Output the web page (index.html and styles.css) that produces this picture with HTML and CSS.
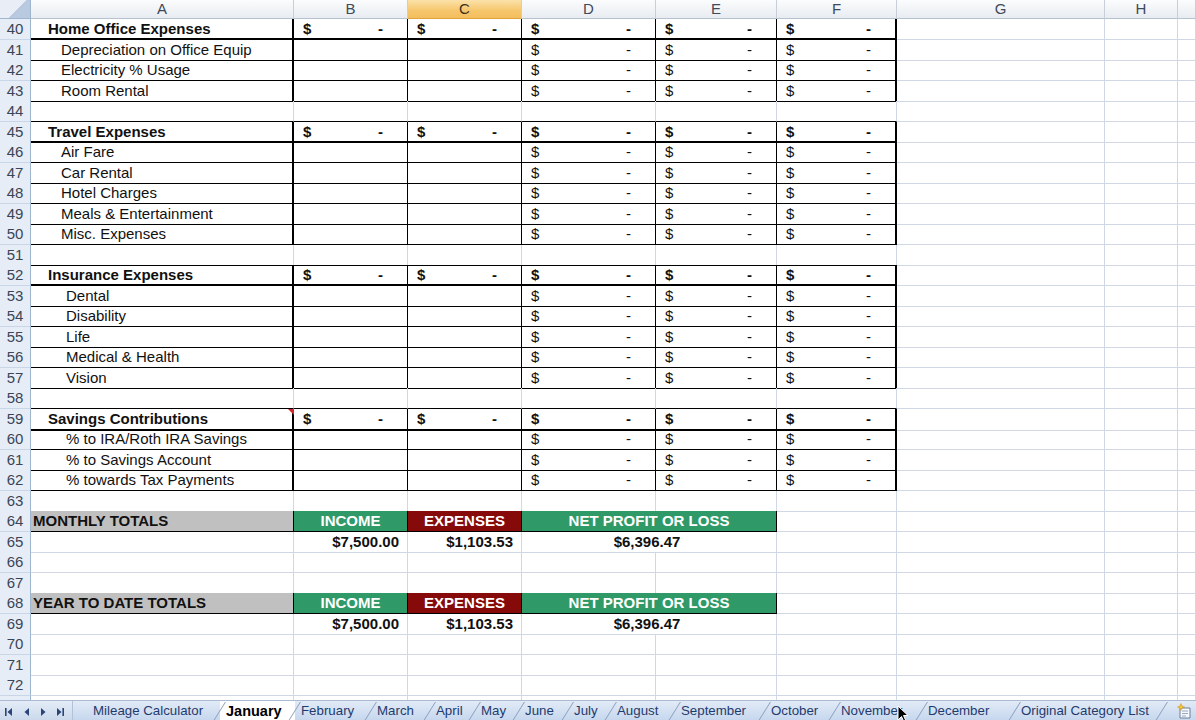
FILE: index.html
```html
<!DOCTYPE html>
<html>
<head>
<meta charset="utf-8">
<title>Budget - January</title>
<link rel="stylesheet" href="styles.css">
</head>
<body>
<div class="sheet">
  <div class="row hdrrow">
    <div class="corner"></div>
    <div class="ch">A</div><div class="ch">B</div><div class="ch sel">C</div><div class="ch">D</div><div class="ch">E</div><div class="ch">F</div><div class="ch">G</div><div class="ch">H</div><div class="ch"></div>
  </div>

  <div class="row hd">
    <div class="rh">40</div>
    <div class="c bb2 br2 h1">Home Office Expenses</div>
    <div class="c m bb2 br"><span>$</span><span>-</span></div>
    <div class="c m bb2 br"><span>$</span><span>-</span></div>
    <div class="c m bb2 br"><span>$</span><span>-</span></div>
    <div class="c m bb2 br"><span>$</span><span>-</span></div>
    <div class="c m bb2 br2"><span>$</span><span>-</span></div>
    <div class="c"></div><div class="c"></div><div class="c"></div>
  </div>
  <div class="row">
    <div class="rh">41</div>
    <div class="c bb br2 s1">Depreciation on Office Equip</div>
    <div class="c bb br"></div><div class="c bb br"></div>
    <div class="c m bb br"><span>$</span><span>-</span></div>
    <div class="c m bb br"><span>$</span><span>-</span></div>
    <div class="c m bb br2"><span>$</span><span>-</span></div>
    <div class="c"></div><div class="c"></div><div class="c"></div>
  </div>
  <div class="row">
    <div class="rh">42</div>
    <div class="c bb br2 s1">Electricity % Usage</div>
    <div class="c bb br"></div><div class="c bb br"></div>
    <div class="c m bb br"><span>$</span><span>-</span></div>
    <div class="c m bb br"><span>$</span><span>-</span></div>
    <div class="c m bb br2"><span>$</span><span>-</span></div>
    <div class="c"></div><div class="c"></div><div class="c"></div>
  </div>
  <div class="row">
    <div class="rh">43</div>
    <div class="c bb br2 s1">Room Rental</div>
    <div class="c bb br"></div><div class="c bb br"></div>
    <div class="c m bb br"><span>$</span><span>-</span></div>
    <div class="c m bb br"><span>$</span><span>-</span></div>
    <div class="c m bb br2"><span>$</span><span>-</span></div>
    <div class="c"></div><div class="c"></div><div class="c"></div>
  </div>
  <div class="row">
    <div class="rh">44</div>
    <div class="c bb"></div><div class="c bb"></div><div class="c bb"></div><div class="c bb"></div><div class="c bb"></div><div class="c bb"></div>
    <div class="c"></div><div class="c"></div><div class="c"></div>
  </div>

  <div class="row hd">
    <div class="rh">45</div>
    <div class="c bb2 br2 h1">Travel Expenses</div>
    <div class="c m bb2 br"><span>$</span><span>-</span></div>
    <div class="c m bb2 br"><span>$</span><span>-</span></div>
    <div class="c m bb2 br"><span>$</span><span>-</span></div>
    <div class="c m bb2 br"><span>$</span><span>-</span></div>
    <div class="c m bb2 br2"><span>$</span><span>-</span></div>
    <div class="c"></div><div class="c"></div><div class="c"></div>
  </div>
  <div class="row">
    <div class="rh">46</div>
    <div class="c bb br2 s1">Air Fare</div>
    <div class="c bb br"></div><div class="c bb br"></div>
    <div class="c m bb br"><span>$</span><span>-</span></div>
    <div class="c m bb br"><span>$</span><span>-</span></div>
    <div class="c m bb br2"><span>$</span><span>-</span></div>
    <div class="c"></div><div class="c"></div><div class="c"></div>
  </div>
  <div class="row">
    <div class="rh">47</div>
    <div class="c bb br2 s1">Car Rental</div>
    <div class="c bb br"></div><div class="c bb br"></div>
    <div class="c m bb br"><span>$</span><span>-</span></div>
    <div class="c m bb br"><span>$</span><span>-</span></div>
    <div class="c m bb br2"><span>$</span><span>-</span></div>
    <div class="c"></div><div class="c"></div><div class="c"></div>
  </div>
  <div class="row">
    <div class="rh">48</div>
    <div class="c bb br2 s1">Hotel Charges</div>
    <div class="c bb br"></div><div class="c bb br"></div>
    <div class="c m bb br"><span>$</span><span>-</span></div>
    <div class="c m bb br"><span>$</span><span>-</span></div>
    <div class="c m bb br2"><span>$</span><span>-</span></div>
    <div class="c"></div><div class="c"></div><div class="c"></div>
  </div>
  <div class="row">
    <div class="rh">49</div>
    <div class="c bb br2 s1">Meals &amp; Entertainment</div>
    <div class="c bb br"></div><div class="c bb br"></div>
    <div class="c m bb br"><span>$</span><span>-</span></div>
    <div class="c m bb br"><span>$</span><span>-</span></div>
    <div class="c m bb br2"><span>$</span><span>-</span></div>
    <div class="c"></div><div class="c"></div><div class="c"></div>
  </div>
  <div class="row">
    <div class="rh">50</div>
    <div class="c bb br2 s1">Misc. Expenses</div>
    <div class="c bb br"></div><div class="c bb br"></div>
    <div class="c m bb br"><span>$</span><span>-</span></div>
    <div class="c m bb br"><span>$</span><span>-</span></div>
    <div class="c m bb br2"><span>$</span><span>-</span></div>
    <div class="c"></div><div class="c"></div><div class="c"></div>
  </div>
  <div class="row">
    <div class="rh">51</div>
    <div class="c bb"></div><div class="c bb"></div><div class="c bb"></div><div class="c bb"></div><div class="c bb"></div><div class="c bb"></div>
    <div class="c"></div><div class="c"></div><div class="c"></div>
  </div>

  <div class="row hd">
    <div class="rh">52</div>
    <div class="c bb2 br2 h1">Insurance Expenses</div>
    <div class="c m bb2 br"><span>$</span><span>-</span></div>
    <div class="c m bb2 br"><span>$</span><span>-</span></div>
    <div class="c m bb2 br"><span>$</span><span>-</span></div>
    <div class="c m bb2 br"><span>$</span><span>-</span></div>
    <div class="c m bb2 br2"><span>$</span><span>-</span></div>
    <div class="c"></div><div class="c"></div><div class="c"></div>
  </div>
  <div class="row">
    <div class="rh">53</div>
    <div class="c bb br2 s2">Dental</div>
    <div class="c bb br"></div><div class="c bb br"></div>
    <div class="c m bb br"><span>$</span><span>-</span></div>
    <div class="c m bb br"><span>$</span><span>-</span></div>
    <div class="c m bb br2"><span>$</span><span>-</span></div>
    <div class="c"></div><div class="c"></div><div class="c"></div>
  </div>
  <div class="row">
    <div class="rh">54</div>
    <div class="c bb br2 s2">Disability</div>
    <div class="c bb br"></div><div class="c bb br"></div>
    <div class="c m bb br"><span>$</span><span>-</span></div>
    <div class="c m bb br"><span>$</span><span>-</span></div>
    <div class="c m bb br2"><span>$</span><span>-</span></div>
    <div class="c"></div><div class="c"></div><div class="c"></div>
  </div>
  <div class="row">
    <div class="rh">55</div>
    <div class="c bb br2 s2">Life</div>
    <div class="c bb br"></div><div class="c bb br"></div>
    <div class="c m bb br"><span>$</span><span>-</span></div>
    <div class="c m bb br"><span>$</span><span>-</span></div>
    <div class="c m bb br2"><span>$</span><span>-</span></div>
    <div class="c"></div><div class="c"></div><div class="c"></div>
  </div>
  <div class="row">
    <div class="rh">56</div>
    <div class="c bb br2 s2">Medical &amp; Health</div>
    <div class="c bb br"></div><div class="c bb br"></div>
    <div class="c m bb br"><span>$</span><span>-</span></div>
    <div class="c m bb br"><span>$</span><span>-</span></div>
    <div class="c m bb br2"><span>$</span><span>-</span></div>
    <div class="c"></div><div class="c"></div><div class="c"></div>
  </div>
  <div class="row">
    <div class="rh">57</div>
    <div class="c bb br2 s2">Vision</div>
    <div class="c bb br"></div><div class="c bb br"></div>
    <div class="c m bb br"><span>$</span><span>-</span></div>
    <div class="c m bb br"><span>$</span><span>-</span></div>
    <div class="c m bb br2"><span>$</span><span>-</span></div>
    <div class="c"></div><div class="c"></div><div class="c"></div>
  </div>
  <div class="row">
    <div class="rh">58</div>
    <div class="c bb"></div><div class="c bb"></div><div class="c bb"></div><div class="c bb"></div><div class="c bb"></div><div class="c bb"></div>
    <div class="c"></div><div class="c"></div><div class="c"></div>
  </div>

  <div class="row hd">
    <div class="rh">59</div>
    <div class="c bb2 br2 h1 note">Savings Contributions</div>
    <div class="c m bb2 br"><span>$</span><span>-</span></div>
    <div class="c m bb2 br"><span>$</span><span>-</span></div>
    <div class="c m bb2 br"><span>$</span><span>-</span></div>
    <div class="c m bb2 br"><span>$</span><span>-</span></div>
    <div class="c m bb2 br2"><span>$</span><span>-</span></div>
    <div class="c"></div><div class="c"></div><div class="c"></div>
  </div>
  <div class="row">
    <div class="rh">60</div>
    <div class="c bb br2 s2">% to IRA/Roth IRA Savings</div>
    <div class="c bb br"></div><div class="c bb br"></div>
    <div class="c m bb br"><span>$</span><span>-</span></div>
    <div class="c m bb br"><span>$</span><span>-</span></div>
    <div class="c m bb br2"><span>$</span><span>-</span></div>
    <div class="c"></div><div class="c"></div><div class="c"></div>
  </div>
  <div class="row">
    <div class="rh">61</div>
    <div class="c bb br2 s2">% to Savings Account</div>
    <div class="c bb br"></div><div class="c bb br"></div>
    <div class="c m bb br"><span>$</span><span>-</span></div>
    <div class="c m bb br"><span>$</span><span>-</span></div>
    <div class="c m bb br2"><span>$</span><span>-</span></div>
    <div class="c"></div><div class="c"></div><div class="c"></div>
  </div>
  <div class="row">
    <div class="rh">62</div>
    <div class="c bb br2 s2">% towards Tax Payments</div>
    <div class="c bb br"></div><div class="c bb br"></div>
    <div class="c m bb br"><span>$</span><span>-</span></div>
    <div class="c m bb br"><span>$</span><span>-</span></div>
    <div class="c m bb br2"><span>$</span><span>-</span></div>
    <div class="c"></div><div class="c"></div><div class="c"></div>
  </div>
  <div class="row">
    <div class="rh">63</div>
    <div class="c bb"></div><div class="c bb"></div><div class="c bb"></div><div class="c bb"></div><div class="c bb"></div>
    <div class="c"></div><div class="c"></div><div class="c"></div><div class="c"></div>
  </div>

  <div class="row">
    <div class="rh">64</div>
    <div class="c bb br tl">MONTHLY TOTALS</div>
    <div class="c bb br lab green">INCOME</div>
    <div class="c bb br lab red">EXPENSES</div>
    <div class="c bb br lab green span2">NET PROFIT OR LOSS</div>
    <div class="c"></div><div class="c"></div><div class="c"></div><div class="c"></div>
  </div>
  <div class="row">
    <div class="rh">65</div>
    <div class="c"></div>
    <div class="c val">$7,500.00</div>
    <div class="c val">$1,103.53</div>
    <div class="c val mid span2">$6,396.47</div>
    <div class="c"></div><div class="c"></div><div class="c"></div><div class="c"></div>
  </div>
  <div class="row">
    <div class="rh">66</div>
    <div class="c"></div><div class="c"></div><div class="c"></div><div class="c"></div><div class="c"></div><div class="c"></div><div class="c"></div><div class="c"></div><div class="c"></div>
  </div>
  <div class="row">
    <div class="rh">67</div>
    <div class="c bb"></div><div class="c bb"></div><div class="c bb"></div><div class="c bb"></div><div class="c bb"></div>
    <div class="c"></div><div class="c"></div><div class="c"></div><div class="c"></div>
  </div>
  <div class="row">
    <div class="rh">68</div>
    <div class="c bb br tl">YEAR TO DATE TOTALS</div>
    <div class="c bb br lab green">INCOME</div>
    <div class="c bb br lab red">EXPENSES</div>
    <div class="c bb br lab green span2">NET PROFIT OR LOSS</div>
    <div class="c"></div><div class="c"></div><div class="c"></div><div class="c"></div>
  </div>
  <div class="row">
    <div class="rh">69</div>
    <div class="c"></div>
    <div class="c val">$7,500.00</div>
    <div class="c val">$1,103.53</div>
    <div class="c val mid span2">$6,396.47</div>
    <div class="c"></div><div class="c"></div><div class="c"></div><div class="c"></div>
  </div>
  <div class="row">
    <div class="rh">70</div>
    <div class="c"></div><div class="c"></div><div class="c"></div><div class="c"></div><div class="c"></div><div class="c"></div><div class="c"></div><div class="c"></div><div class="c"></div>
  </div>
  <div class="row">
    <div class="rh">71</div>
    <div class="c"></div><div class="c"></div><div class="c"></div><div class="c"></div><div class="c"></div><div class="c"></div><div class="c"></div><div class="c"></div><div class="c"></div>
  </div>
  <div class="row">
    <div class="rh">72</div>
    <div class="c"></div><div class="c"></div><div class="c"></div><div class="c"></div><div class="c"></div><div class="c"></div><div class="c"></div><div class="c"></div><div class="c"></div>
  </div>
  <div class="row">
    <div class="rh"></div>
    <div class="c"></div><div class="c"></div><div class="c"></div><div class="c"></div><div class="c"></div><div class="c"></div><div class="c"></div><div class="c"></div><div class="c"></div>
  </div>
</div>

<div class="tabbar">
  <div class="nav">
    <svg width="72" height="20" viewBox="0 0 72 20">
      <g fill="#2a4677">
        <rect x="5" y="7" width="1.6" height="8"/>
        <path d="M12 7 L7.5 11 L12 15 Z"/>
        <path d="M29 7 L24.5 11 L29 15 Z"/>
        <path d="M41 7 L45.5 11 L41 15 Z"/>
        <path d="M57 7 L61.5 11 L57 15 Z"/>
        <rect x="62.4" y="7" width="1.6" height="8"/>
      </g>
    </svg>
  </div>
  <div class="tabs">
    <div class="tab first t-mileage">Mileage Calculator</div>
    <div class="tab on t-jan">January</div>
    <div class="tab t-feb">February</div>
    <div class="tab t-mar">March</div>
    <div class="tab t-apr">April</div>
    <div class="tab t-may">May</div>
    <div class="tab t-jun">June</div>
    <div class="tab t-jul">July</div>
    <div class="tab t-aug">August</div>
    <div class="tab t-sep">September</div>
    <div class="tab t-oct">October</div>
    <div class="tab t-nov">November</div>
    <div class="tab t-dec">December</div>
    <div class="tab t-orig">Original Category List</div>
    <div class="tab-end"></div>
    <div class="newsheet">
      <svg width="18" height="16" viewBox="0 0 18 16">
        <path d="M4 5 H14 V15 H4 Z" fill="#f4f7fb" stroke="#6c7f99" stroke-width="1"/>
        <path d="M6 8 H12 M6 10.5 H12 M6 13 H10" stroke="#9aa9bd" stroke-width="1"/>
        <path d="M5 0.5 L6 3 L8.5 4 L6 5 L5 7.5 L4 5 L1.5 4 L4 3 Z" fill="#f5c431" stroke="#c9930b" stroke-width="0.5"/>
      </svg>
    </div>
  </div>
  <svg class="cursor" width="12" height="18" viewBox="0 0 12 18">
    <path d="M1 1 L1 15 L4.5 11.5 L7 17 L9 16 L6.5 10.5 L11 10.5 Z" fill="#000" stroke="#fff" stroke-width="1"/>
  </svg>
</div>
</body>
</html>
```

FILE: styles.css
```css
:root {
  --cols: 31px 263px 114px 114px 134px 121px 120px 208px 73px 18px;
  --grid: #d0d7e5;
}

* { box-sizing: border-box; }

body {
  margin: 0;
  width: 1196px;
  height: 720px;
  overflow: hidden;
  background: #fff;
  font-family: "Liberation Sans", Arial, sans-serif;
  position: relative;
}

.sheet {
  height: 700px;
  overflow: hidden;
}

.row {
  display: grid;
  grid-template-columns: var(--cols);
  height: 20.5px;
}

.hdrrow { height: 19px; }

.corner {
  background: linear-gradient(135deg, #e9eef6 55%, #b9c9df 56%);
  border-right: 1px solid #9eb6ce;
  border-bottom: 1px solid #9eb6ce;
}

.ch {
  background: linear-gradient(#fbfcfd, #e8ecf1);
  border-right: 1px solid #c8cfd9;
  border-bottom: 1px solid #b7c2d1;
  color: #3f4a5a;
  font-size: 15px;
  line-height: 18px;
  text-align: center;
}

.ch.sel {
  background: linear-gradient(#fbe2a9, #f6c66c 60%, #f3bd5c);
  border-bottom-color: #e0a43c;
  color: #3b3020;
}

.rh {
  background: #e6edf7;
  border-right: 1px solid #9eb6ce;
  border-bottom: 1px solid #c9d6e8;
  color: #3b4555;
  font-size: 15px;
  line-height: 20px;
  text-align: center;
}

.c {
  border-right: 1px solid var(--grid);
  border-bottom: 1px solid var(--grid);
  font-size: 15px;
  line-height: 20px;
  padding: 0 2px;
  white-space: nowrap;
  overflow: hidden;
  color: #111;
}

.hd .c { font-weight: bold; }

.bb { border-bottom: 1px solid #000; }
.bb2 { border-bottom: 2px solid #000; }
.br { border-right: 1px solid #000; }
.br2 { border-right: 2px solid #000; }

.h1 { padding-left: 17px; }
.s1 { padding-left: 30px; }
.s2 { padding-left: 35px; }

.m {
  display: flex;
  justify-content: space-between;
  padding-left: 9px;
  padding-right: 24px;
}

.note { position: relative; overflow: visible; }
.note::after {
  content: "";
  position: absolute;
  right: -2px;
  top: 0;
  border-top: 6px solid #d4242a;
  border-left: 6px solid transparent;
}

.span2 { grid-column: span 2; }

.tl {
  background: #c0c0c0;
  font-weight: bold;
}

.lab {
  color: #fff;
  font-weight: bold;
  text-align: center;
}

.green { background: #2f9a68; }
.red { background: #870a0a; }

.val {
  font-weight: bold;
  text-align: right;
  padding-right: 8px;
}

.val.mid {
  text-align: center;
  padding-right: 6px;
}

/* sheet tab bar */
.tabbar {
  height: 20px;
  display: flex;
  background: linear-gradient(#e4ecf7, #cbd9ec);
  border-top: 1px solid #a9bad2;
  color: #1f3b6d;
  font-size: 13.3px;
  line-height: 20px;
}

.nav {
  width: 72px;
  flex: none;
}

.nav svg { display: block; }

.tabs {
  display: flex;
  flex: 1;
  background: linear-gradient(#e2ebf7, #c6d7ee);
}

.tab {
  position: relative;
  flex: none;
  padding-left: 6px;
  white-space: nowrap;
  overflow: visible;
}

.tab::before,
.tab-end::before {
  content: "";
  position: absolute;
  left: -1px;
  top: 1px;
  height: 19px;
  border-left: 1px solid #8a9fbe;
  transform: skewX(-32deg);
}

.tab.first {
  padding-left: 20px;
  border-left: 1px solid #b2c2d8;
}

.tab.first::before { display: none; }

.tab.on {
  background: #fff;
  color: #000;
  font-weight: bold;
  font-size: 14.5px;
}

.tab-end {
  position: relative;
  width: 10px;
}

.t-mileage { width: 148px; }
.t-jan { width: 75px; }
.t-feb { width: 76px; }
.t-mar { width: 59px; }
.t-apr { width: 45px; }
.t-may { width: 44px; }
.t-jun { width: 49px; }
.t-jul { width: 43px; }
.t-aug { width: 64px; }
.t-sep { width: 90px; }
.t-oct { width: 70px; }
.t-nov { width: 87px; }
.t-dec { width: 93px; }
.t-orig { width: 147px; }

.newsheet {
  margin-left: auto;
  padding: 2px 2px 0 0;
}

.newsheet svg { display: block; }

.cursor {
  position: absolute;
  left: 897px;
  top: 705px;
}
```
